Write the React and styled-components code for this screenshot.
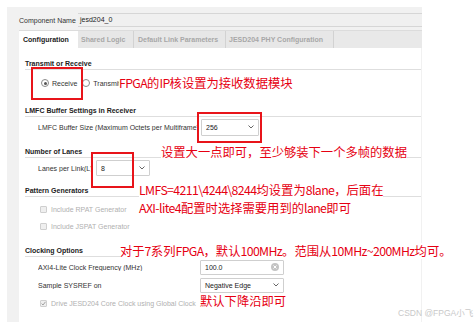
import React from "react"
import styled, { createGlobalStyle } from "styled-components"

const Global = createGlobalStyle`
  html, body {
    margin: 0;
    padding: 0;
    background: #ffffff;
  }
  body {
    font-family: "Liberation Sans", Arial, sans-serif;
    overflow: hidden;
  }
`

const Page = styled.div`
  position: relative;
  width: 474px;
  height: 322px;
  padding: 7px 0 0 7px;
  box-sizing: border-box;
  overflow: hidden;
`

const Panel = styled.div`
  width: 415px;
  height: 315px;
  background: #f1f1f1;
  padding: 6px 0 0 12px;
  box-sizing: border-box;
  display: flex;
  flex-direction: column;
`

const NameRow = styled.div`
  display: flex;
  align-items: center;
  height: 14px;
`

const NameLabel = styled.span`
  width: 59px;
  font-size: 7px;
  color: #333;
  white-space: nowrap;
`

const NameInput = styled.div`
  flex: 1;
  height: 14px;
  box-sizing: border-box;
  border-top: 1px solid #d6d6d6;
  border-bottom: 1px solid #d6d6d6;
  background: #f0f0f0;
  padding-left: 2px;
  font-size: 7px;
  color: #222;
  line-height: 12px;
`

const TabBar = styled.div`
  display: flex;
  margin-top: 3px;
  height: 18px;
  box-sizing: border-box;
  border-top: 1px solid #dcdcdc;
  background: #e9e9e9;
`

const Tab = styled.div`
  width: ${({ w }) => w}px;
  box-sizing: border-box;
  padding-left: ${({ pl }) => pl || 4}px;
  font-size: 7px;
  font-weight: bold;
  line-height: 17px;
  white-space: nowrap;
  color: ${({ active }) => (active ? "#222" : "#a8a8a8")};
  background: ${({ active }) => (active ? "#ffffff" : "#e7e7e7")};
  border-right: 1px solid ${({ active }) => (active ? "#ffffff" : "#d2d2d2")};
`

const Content = styled.div`
  flex: 1;
  background: #ffffff;
  padding: 10px 0 0 6px;
  margin-right: 1px;
`

const Section = styled.div`
  margin-top: ${({ gap }) => gap || 0}px;
`

const Header = styled.div`
  height: 11px;
  line-height: 11px;
  font-size: 7px;
  font-weight: bold;
  color: #222;
  border-bottom: 1px solid #dedede;
  white-space: nowrap;
`

const Row = styled.div`
  display: flex;
  align-items: center;
  height: ${({ h }) => h || 18}px;
  margin-top: ${({ mt }) => mt || 0}px;
  padding-left: ${({ pl }) => pl || 13}px;
  font-size: 7px;
  color: ${({ muted }) => (muted ? "#b0b0b0" : "#333")};
  white-space: nowrap;
`

const Label = styled.span`
  width: ${({ w }) => w}px;
  overflow: hidden;
`

const Radio = styled.span`
  width: 8px;
  height: 8px;
  box-sizing: border-box;
  border-radius: 50%;
  border: 1px solid #8a8a8a;
  background: #fff;
  display: flex;
  align-items: center;
  justify-content: center;
  margin-right: 3px;

  &::after {
    content: "";
    width: 3px;
    height: 3px;
    border-radius: 50%;
    background: ${({ checked }) => (checked ? "#555" : "transparent")};
  }
`

const RadioText = styled.span`
  margin-right: ${({ mr }) => mr || 0}px;
`

const Check = styled.span`
  width: 7px;
  height: 7px;
  box-sizing: border-box;
  border: 1px solid #cfcfcf;
  border-radius: 1px;
  background: #efefef;
  margin-right: 4px;
  display: flex;
  align-items: center;
  justify-content: center;
`

const Field = styled.div`
  width: ${({ w }) => w}px;
  height: ${({ h }) => h || 16}px;
  box-sizing: border-box;
  border: 1px solid #cfcfcf;
  border-radius: 1px;
  background: #fff;
  display: flex;
  align-items: center;
  justify-content: space-between;
  padding: 0 4px 0 4px;
  font-size: 7px;
  color: #222;
`

const Note = styled.div`
  position: absolute;
  left: ${({ x }) => x}px;
  top: ${({ y }) => y}px;
  font-family: "Noto Sans CJK SC", "Liberation Sans", sans-serif;
  font-size: 12.3px;
  line-height: ${({ lh }) => lh || 16}px;
  color: #e60012;
  background: #ffffff;
  white-space: nowrap;
`

// latin runs inside the notes are a bit narrower in the original font
const Lat = styled.span`
  letter-spacing: -0.6px;
`

const RedBox = styled.div`
  position: absolute;
  left: ${({ x }) => x}px;
  top: ${({ y }) => y}px;
  width: ${({ w }) => w}px;
  height: ${({ h }) => h}px;
  box-sizing: border-box;
  border: 2px solid #e8141a;
`

const Watermark = styled.div`
  position: absolute;
  left: 398px;
  top: 307px;
  font-family: "Liberation Sans", "Noto Sans CJK SC", sans-serif;
  font-size: 8.5px;
  line-height: 12px;
  color: #c9c9c9;
  white-space: nowrap;
`

const Chevron = () => (
  <svg width="6" height="4" viewBox="0 0 6 4">
    <polyline points="0.5,0.5 3,3 5.5,0.5" fill="none" stroke="#666" strokeWidth="1" />
  </svg>
)

const Clear = () => (
  <svg width="8" height="8" viewBox="0 0 8 8">
    <circle cx="4" cy="4" r="4" fill="#c4c4c4" />
    <path d="M2.5 2.5 L5.5 5.5 M5.5 2.5 L2.5 5.5" stroke="#fff" strokeWidth="1" />
  </svg>
)

const Tick = () => (
  <svg width="5" height="5" viewBox="0 0 5 5">
    <polyline points="0.6,2.6 2,4 4.5,0.8" fill="none" stroke="#a0a0a0" strokeWidth="1" />
  </svg>
)

export default function App() {
  return (
    <Page>
      <Global />
      <Panel>
        <NameRow>
          <NameLabel>Component Name</NameLabel>
          <NameInput>jesd204_0</NameInput>
        </NameRow>

        <TabBar>
          <Tab w={59} active>Configuration</Tab>
          <Tab w={56} pl={3}>Shared Logic</Tab>
          <Tab w={92}>Default Link Parameters</Tab>
          <Tab w={108} pl={3}>JESD204 PHY Configuration</Tab>
        </TabBar>

        <Content>
          <Section>
            <Header>Transmit or Receive</Header>
            <Row mt={4} pl={16}>
              <Radio checked />
              <RadioText mr={5}>Receive</RadioText>
              <Radio />
              <RadioText>Transmit</RadioText>
            </Row>
          </Section>

          <Section gap={13}>
            <Header>LMFC Buffer Settings in Receiver</Header>
            <Row mt={1}>
              <Label w={163}>LMFC Buffer Size (Maximum Octets per Multiframe)</Label>
              <Field w={58} h={17}>
                256
                <Chevron />
              </Field>
            </Row>
          </Section>

          <Section gap={10}>
            <Header>Number of Lanes</Header>
            <Row mt={1}>
              <Label w={58}>Lanes per Link(L)</Label>
              <Field w={54}>
                8
                <Chevron />
              </Field>
            </Row>
          </Section>

          <Section gap={8}>
            <Header>Pattern Generators</Header>
            <Row mt={4} h={17} pl={15} muted>
              <Check />
              Include RPAT Generator
            </Row>
            <Row h={17} pl={15} muted>
              <Check />
              Include JSPAT Generator
            </Row>
          </Section>

          <Section gap={10}>
            <Header>Clocking Options</Header>
            <Row mt={1}>
              <Label w={162}>AXI4-Lite Clock Frequency (MHz)</Label>
              <Field w={84} h={15}>
                100.0
                <Clear />
              </Field>
            </Row>
            <Row>
              <Label w={162}>Sample SYSREF on</Label>
              <Field w={84} h={15}>
                Negative Edge
                <Chevron />
              </Field>
            </Row>
            <Row pl={15} muted>
              <Check>
                <Tick />
              </Check>
              Drive JESD204 Core Clock using Global Clock
            </Row>
          </Section>
        </Content>
      </Panel>

      <RedBox x={31} y={67} w={52} h={33} />
      <RedBox x={197} y={112} w={65} h={31} />
      <RedBox x={91} y={152} w={43} h={36} />

      <Note x={119} y={75}>
        <Lat>FPGA</Lat>的<Lat>IP</Lat>核设置为接收数据模块
      </Note>
      <Note x={161} y={144}>设置大一点即可，至少够装下一个多帧的数据</Note>
      <Note x={139} y={181} lh={18}>
        <Lat>LMFS=4211\4244\8244</Lat>均设置为<Lat>8lane</Lat>，后面在
        <br />
        <Lat>AXI-lite4</Lat>配置时选择需要用到的<Lat>lane</Lat>即可
      </Note>
      <Note x={120} y={243}>
        对于<Lat>7</Lat>系列<Lat>FPGA</Lat>，默认<Lat>100MHz</Lat>。范围从<Lat>10MHz~200MHz</Lat>均可。
      </Note>
      <Note x={200} y={293}>默认下降沿即可</Note>

      <Watermark>CSDN @FPGA小飞</Watermark>
    </Page>
  )
}
